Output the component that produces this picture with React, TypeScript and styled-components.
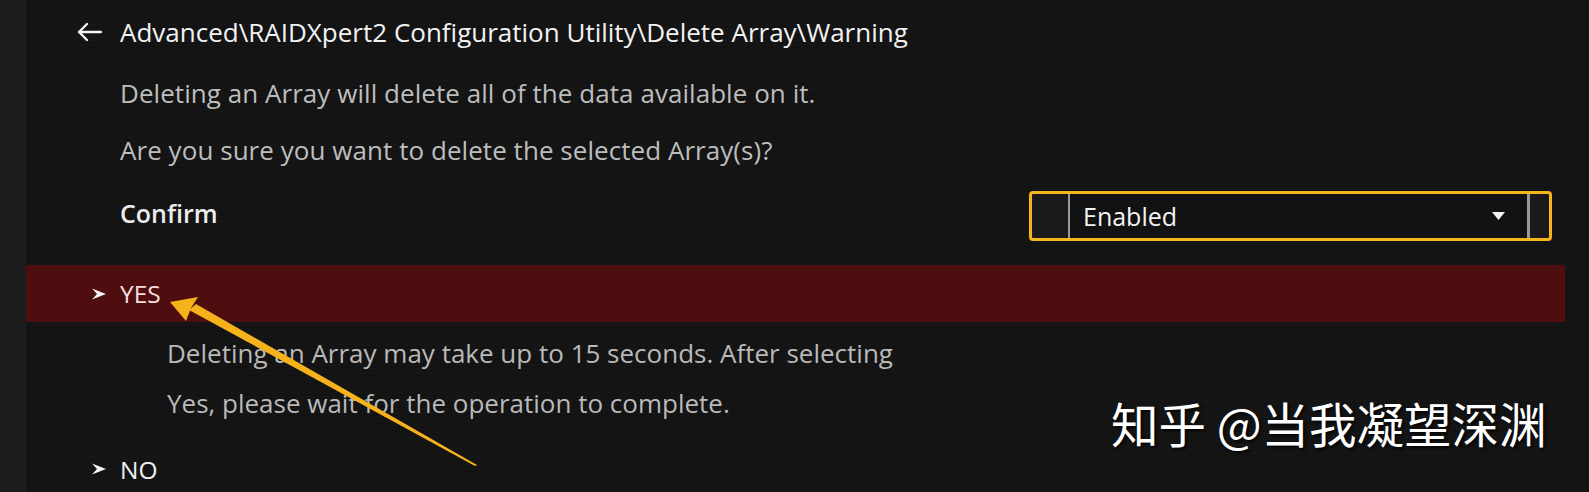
import React from "react";
import styled, { createGlobalStyle } from "styled-components";

const Global = createGlobalStyle`
  html, body { margin: 0; padding: 0; background: #151515; }
  body { font-family: "Open Sans", "DejaVu Sans", sans-serif; }
  * { box-sizing: border-box; }
`;

const Page = styled.div`
  position: relative;
  display: flex;
  width: 1589px;
  height: 492px;
  overflow: hidden;
  background: #151515;
`;

const Sidebar = styled.div`
  width: 26px;
  flex: none;
  background: #1d1d1d;
`;

const Main = styled.div`
  flex: 1;
  display: flex;
  flex-direction: column;
  overflow: hidden;
  background: repeating-linear-gradient(
    to bottom,
    #151515 0px,
    #151515 2px,
    #131313 2px,
    #131313 4px
  );
`;

const Header = styled.div`
  flex: none;
  height: 64px;
  display: flex;
  align-items: center;
  padding-left: 50px;
  gap: 18px;
  color: #f2f2f2;
  font-size: 26px;
  letter-spacing: 0px;
`;

const BackArrow = styled.svg`
  width: 26px;
  height: 20px;
  flex: none;
`;

const Desc = styled.div<{ $h: number }>`
  flex: none;
  height: ${(p) => p.$h}px;
  display: flex;
  align-items: center;
  padding-left: 94px;
  color: #bdbdbd;
  font-size: 26px;
  letter-spacing: 0.05px;
`;

const SettingRow = styled.div`
  flex: none;
  height: 70px;
  display: flex;
  align-items: center;
  padding-left: 94px;
  padding-right: 37px;
  justify-content: space-between;
  margin-bottom: 17px;
`;

const Label = styled.div`
  color: #ececec;
  font-size: 25px;
  font-weight: 600;
`;

const Focus = styled.div`
  width: 523px;
  height: 50px;
  margin-top: 6px;
  border: 3px solid #f4b51d;
  border-radius: 4px;
  padding-left: 36px;
  padding-right: 19px;
  display: flex;
  background: #1a1a1a;
`;

const Select = styled.div`
  flex: 1;
  display: flex;
  align-items: center;
  justify-content: space-between;
  border-left: 2px solid #9a9a9a;
  border-right: 3px solid #9a9a9a;
  background: #121212;
  padding-left: 13px;
  padding-right: 22px;
  color: #f4f4f4;
  font-size: 25px;
`;

const Caret = styled.svg`
  width: 13px;
  height: 8px;
`;

const Option = styled.div<{ $active?: boolean }>`
  flex: none;
  height: ${(p) => (p.$active ? 57 : 56)}px;
  display: flex;
  align-items: center;
  padding-left: 65px;
  gap: 13px;
  margin-right: ${(p) => (p.$active ? 24 : 0)}px;
  background: ${(p) => (p.$active ? "#4e0e10" : "transparent")};
  color: ${(p) => (p.$active ? "#f6dede" : "#f0f0f0")};
  font-size: 24.5px;
`;

const Chevron = styled.svg`
  width: 16px;
  height: 14px;
  flex: none;
`;

const Help = styled.div`
  flex: none;
  padding-top: 6px;
  padding-left: 141px;
  margin-bottom: 13px;
  display: flex;
  flex-direction: column;
`;

const HelpLine = styled.div`
  height: 50px;
  display: flex;
  align-items: center;
  color: #b9b9b9;
  font-size: 26px;
`;

const Watermark = styled.div`
  position: absolute;
  left: 1111px;
  top: 394px;
  color: #ffffff;
  font-family: "Noto Sans CJK SC", "Noto Sans", sans-serif;
  font-size: 47.5px;
  line-height: 58px;
  text-shadow: 2px 2px 3px rgba(0, 0, 0, 0.8);
  white-space: nowrap;
`;

const Annotation = styled.svg`
  position: absolute;
  left: 0;
  top: 0;
  pointer-events: none;
`;

const Arrowhead = () => (
  <Chevron viewBox="0 0 16 14">
    <path d="M1 1.5 L15 7 L1 12.5 L6 7 Z" fill="#f4f4f4" />
  </Chevron>
);

export default function App() {
  return (
    <>
      <Global />
      <Page>
        <Sidebar />
        <Main>
          <Header>
            <BackArrow viewBox="0 0 26 20">
              <path
                d="M25 10 H3 M11 2 L3 10 L11 18"
                stroke="#f2f2f2"
                strokeWidth="2.4"
                fill="none"
                strokeLinecap="round"
                strokeLinejoin="round"
              />
            </BackArrow>
            <span>Advanced\RAIDXpert2 Configuration Utility\Delete Array\Warning</span>
          </Header>
          <Desc $h={58}>Deleting an Array will delete all of the data available on it.</Desc>
          <Desc $h={56}>Are you sure you want to delete the selected Array(s)?</Desc>
          <SettingRow>
            <Label>Confirm</Label>
            <Focus>
              <Select>
                <span>Enabled</span>
                <Caret viewBox="0 0 13 8">
                  <path d="M0 0 H13 L6.5 8 Z" fill="#f4f4f4" />
                </Caret>
              </Select>
            </Focus>
          </SettingRow>
          <Option $active>
            <Arrowhead />
            <span>YES</span>
          </Option>
          <Help>
            <HelpLine>Deleting an Array may take up to 15 seconds. After selecting</HelpLine>
            <HelpLine>Yes, please wait for the operation to complete.</HelpLine>
          </Help>
          <Option>
            <Arrowhead />
            <span>NO</span>
          </Option>
        </Main>
        <Watermark>知乎 @当我凝望深渊</Watermark>
        <Annotation width="1589" height="492" viewBox="0 0 1589 492">
          <polygon points="189,310 196,304 477,465 475,466" fill="#f5b21a" />
          <polygon points="170,302 198,297 191,308 186,321" fill="#f5b21a" />
        </Annotation>
      </Page>
    </>
  );
}
